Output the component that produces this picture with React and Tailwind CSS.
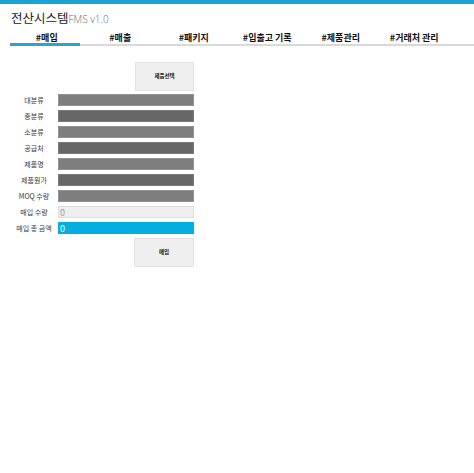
const tabs = ["#매입", "#매출", "#패키지", "#입출고 기록", "#제품관리", "#거래처 관리"];

const rows = [
  { label: "대분류", tone: "light" },
  { label: "중분류", tone: "dark" },
  { label: "소분류", tone: "light" },
  { label: "공급처", tone: "dark" },
  { label: "제품명", tone: "light" },
  { label: "제품원가", tone: "dark" },
  { label: "MOQ 수량", tone: "light" },
  { label: "매입 수량", tone: "qty" },
  { label: "매입 총 금액", tone: "total" },
];

const kr = { fontFamily: '"Noto Sans CJK KR", "Noto Sans", sans-serif' };

function Field({ tone }) {
  if (tone === "qty") {
    return (
      <div className="w-[136px] h-[12px] bg-[#efefef] border border-[#dedede] flex items-center pl-[1px] text-[9px] leading-none text-[#9a9a9a]">
        0
      </div>
    );
  }
  if (tone === "total") {
    return (
      <div className="w-[136px] h-[12px] bg-[#05aee0] flex items-center pl-[2px] text-[9px] leading-none text-white">
        0
      </div>
    );
  }
  return (
    <div
      className={
        tone === "light"
          ? "w-[136px] h-[12px] bg-[#7e7e7e] border border-[#939393]"
          : "w-[136px] h-[12px] bg-[#676767] border border-[#7c7c7c]"
      }
    />
  );
}

export default function App() {
  return (
    <div className="w-[474px] h-[473px] bg-white" style={kr}>
      <div className="h-[4px] bg-[#1ba2d4]" />

      <div className="flex items-baseline pl-[11px] pt-[6px] h-[26px]">
        <span className="text-[12.5px] leading-[16px] text-[#222]">전산시스템</span>
        <span
          className="text-[10px] text-[#6b6b6b] font-light"
          style={{ fontFamily: '"Open Sans", sans-serif' }}
        >
          FMS v1.0
        </span>
      </div>

      <div className="flex ml-[10px] h-[13px] items-center pt-[1px]">
        {tabs.map((t) => (
          <div key={t} className="w-[73.5px] text-center text-[9px] font-bold leading-none text-[#111]">
            {t}
          </div>
        ))}
      </div>
      <div className="flex ml-[10px] items-center">
        <div className="w-[70px] h-[3px] bg-[#2aa5c9]" />
        <div className="flex-1 h-[2px] bg-[#d9d9d9]" />
      </div>

      <div className="flex flex-col">
        <button className="ml-[135px] mt-[16px] w-[59px] h-[29px] bg-[#efefef] border border-[#e2e2e2] text-[5.5px] font-bold text-[#111]">
          제품선택
        </button>

        <div className="flex flex-col gap-[4px] mt-[3px]">
          {rows.map((r) => (
            <div key={r.label} className="flex items-center">
              <div className="w-[48px] ml-[10px] text-center text-[7px] leading-none text-[#3a3a3a]">
                {r.label}
              </div>
              <Field tone={r.tone} />
            </div>
          ))}
        </div>

        <button className="ml-[134px] mt-[4px] w-[60px] h-[29px] bg-[#efefef] border border-[#e2e2e2] text-[5.5px] font-bold text-[#111]">
          매입
        </button>
      </div>
    </div>
  );
}
